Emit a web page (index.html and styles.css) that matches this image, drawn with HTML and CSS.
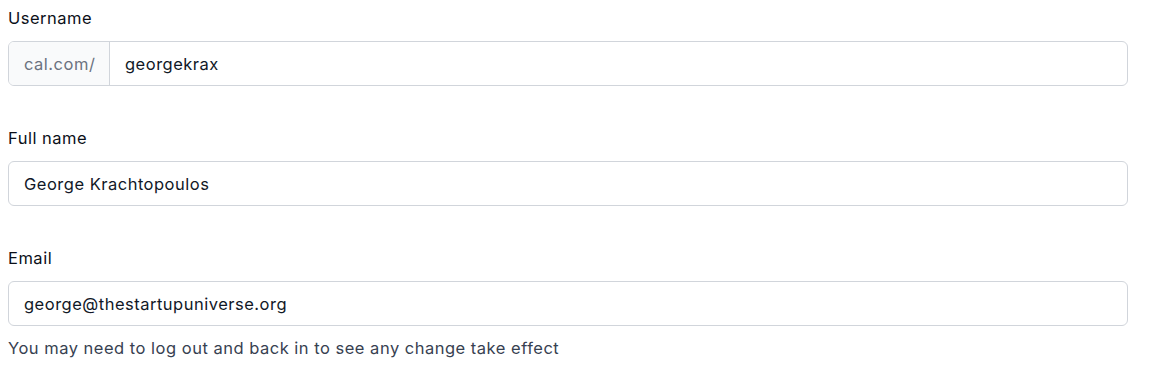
FILE: index.html
```html
<!DOCTYPE html>
<html lang="en">
<head>
<meta charset="utf-8">
<title>Profile</title>
<link rel="stylesheet" href="styles.css">
</head>
<body>
<form class="profile-form">
  <div class="field">
    <label class="field-label" for="username">Username</label>
    <div class="input-group">
      <span class="input-prefix">cal.com/</span>
      <input class="text-input" id="username" type="text" value="georgekrax">
    </div>
  </div>
  <div class="field">
    <label class="field-label" for="fullname">Full name</label>
    <div class="input-group">
      <input class="text-input" id="fullname" type="text" value="George Krachtopoulos">
    </div>
  </div>
  <div class="field">
    <label class="field-label" for="email">Email</label>
    <div class="input-group">
      <input class="text-input" id="email" type="email" value="george@thestartupuniverse.org">
    </div>
    <p class="field-hint">You may need to log out and back in to see any change take effect</p>
  </div>
</form>
</body>
</html>
```

FILE: styles.css
```css
* {
  box-sizing: border-box;
}

body {
  margin: 8px;
  background: #ffffff;
  font-family: Inter, "Liberation Sans", Arial, sans-serif;
  font-size: 16.5px;
  letter-spacing: 0.5px;
  color: #111827;
}

.profile-form {
  width: 1120px;
  display: flex;
  flex-direction: column;
  gap: 42px;
}

.field {
  display: flex;
  flex-direction: column;
}

.field-label {
  display: block;
  font-size: 16.5px;
  line-height: 20px;
  font-weight: 420;
  color: #0b0f19;
  margin-bottom: 13px;
}

.input-group {
  display: flex;
  height: 45px;
  border: 1px solid #d1d5db;
  border-radius: 6px;
  overflow: hidden;
  background: #ffffff;
}

.input-prefix {
  display: flex;
  align-items: center;
  padding: 0 15px;
  width: 101px;
  background: #f9fafb;
  color: #6b7280;
  border-right: 1px solid #d1d5db;
  font-size: 16.5px;
  white-space: nowrap;
}

.text-input {
  flex: 1;
  min-width: 0;
  border: 0;
  outline: none;
  padding: 0 15px;
  font-family: inherit;
  font-size: 16.5px;
  letter-spacing: 0.5px;
  color: #111827;
  background: transparent;
}

.field-hint {
  margin: 10px 0 0;
  font-size: 16.5px;
  line-height: 24px;
  color: #374151;
}
```
